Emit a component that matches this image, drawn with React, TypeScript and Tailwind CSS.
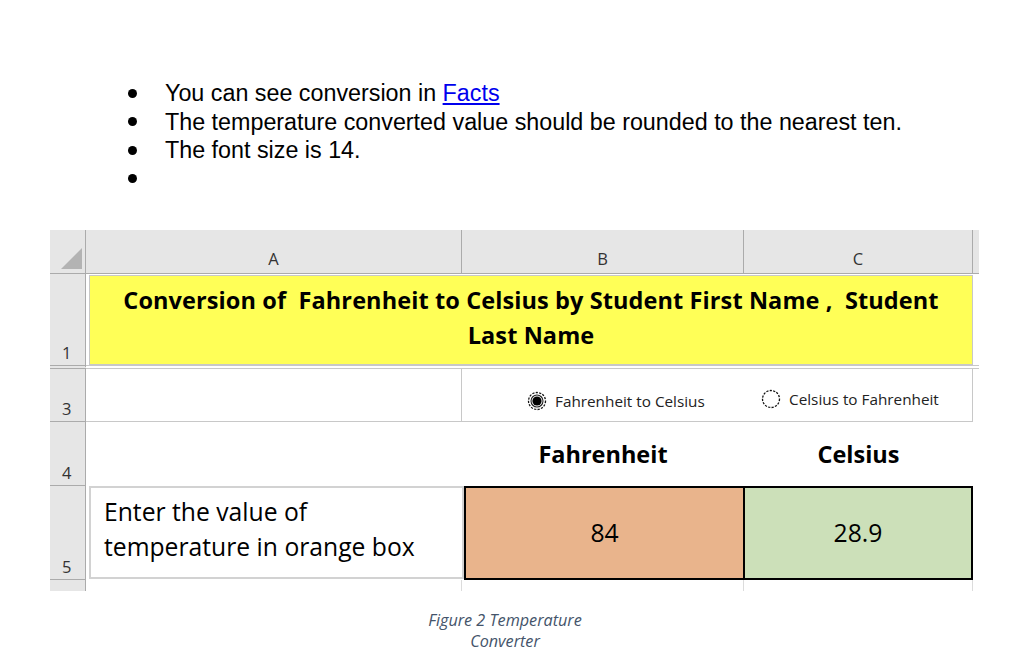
import React from "react";

const cal = { fontFamily: "'Open Sans', Lato, sans-serif" };

function Radio({ checked }: { checked: boolean }) {
  return (
    <svg width="20" height="20" viewBox="0 0 20 20" className="shrink-0">
      <circle cx="10" cy="10" r="8.5" fill="white" stroke="#111" strokeWidth="1.3" strokeDasharray="2.2 1.3" />
      {checked && <circle cx="10" cy="10" r="6" fill="none" stroke="#222" strokeWidth="1.1" />}
      {checked && <circle cx="10" cy="10" r="4.6" fill="#000" />}
    </svg>
  );
}

export default function App() {
  const hdr = "bg-[#e6e6e6] border-r border-b border-[#ababab] flex items-end justify-center pb-[1px] text-[16.5px] text-[#333]";
  const rowNum = "bg-[#e6e6e6] border-r border-b border-[#ababab] flex items-end pl-[12px] text-[16.5px] text-[#333] leading-none pb-[4px]";
  return (
    <div className="w-[1036px] h-[660px] bg-white overflow-hidden flex flex-col">
      <ul
        className="pt-[79px] pl-[128px] text-[23.3px] leading-[28.5px] text-black"
        style={{ fontFamily: "'Liberation Sans', Arial, sans-serif" }}
      >
        {[
          <>You can see conversion in <a className="text-[#0000ee] underline" href="#">Facts</a></>,
          <>The temperature converted value should be rounded to the nearest ten.</>,
          <>The font size is 14.</>,
          <>&nbsp;</>,
        ].map((c, i) => (
          <li key={i} className="flex items-center h-[28.5px]">
            <span className="w-[9px] h-[9px] rounded-full bg-black mr-[28px]" />
            <span>{c}</span>
          </li>
        ))}
      </ul>

      <div
        className="ml-[50px] mt-[37px] w-[929px] h-[361px] overflow-hidden grid grid-cols-[36px_376px_282px_229px_6px] grid-rows-[44px_95px_53px_64px_94px_30px] bg-white"
        style={cal}
      >
        {/* header row */}
        <div className="bg-[#e6e6e6] border-r border-b border-[#ababab] flex items-end justify-end pr-[2px] pb-[3px]">
          <svg width="22" height="22" viewBox="0 0 22 22">
            <polygon points="21,0 21,21 0,21" fill="#b3b3b3" />
          </svg>
        </div>
        <div className={hdr}>A</div>
        <div className={hdr}>B</div>
        <div className={hdr}>C</div>
        <div className="bg-[#e6e6e6] border-b border-[#ababab]" />

        {/* row 1 */}
        <div className={rowNum + " border-b-[4px] border-double"}>1</div>
        <div className="col-span-3 border-b-[4px] border-double border-[#c8c8c8] pl-[3px] pt-[1px] bg-white">
          <div className="h-full bg-[#ffff57] border border-[#c8c8c8] flex flex-col items-center pt-[7px] text-[23.5px] font-bold text-black leading-[35px] tracking-[0.1px]">
            <span className="whitespace-pre">Conversion of  Fahrenheit to Celsius by Student First Name ,  Student</span>
            <span>Last Name</span>
          </div>
        </div>
        <div className="border-b-[4px] border-double border-[#c8c8c8]" />

        {/* row 3 */}
        <div className={rowNum}>3</div>
        <div className="border-r border-b border-[#c8c8c8]" />
        <div className="border-b border-[#c8c8c8] flex items-end pb-[10px] pl-[65px] gap-[8px] text-[15.3px] text-[#222]">
          <Radio checked />
          <span className="leading-[20px]">Fahrenheit to Celsius</span>
        </div>
        <div className="border-b border-r border-[#c8c8c8] flex items-end pb-[12px] pl-[17px] gap-[8px] text-[15.3px] text-[#222]">
          <Radio checked={false} />
          <span className="leading-[20px]">Celsius to Fahrenheit</span>
        </div>
        <div />

        {/* row 4 */}
        <div className={rowNum}>4</div>
        <div />
        <div className="flex items-center justify-center font-bold text-[23.5px] text-black pt-[2px]">Fahrenheit</div>
        <div className="flex items-center justify-center font-bold text-[23.5px] text-black pt-[2px]">Celsius</div>
        <div />

        {/* row 5 */}
        <div className={rowNum}>5</div>
        <div className="pl-[3px] pb-[1px] -mr-[2px]">
          <div className="h-full border-2 border-[#d2d2d2] pl-[13px] pt-[6px] text-[24.7px] leading-[35px] text-black">
            <div>Enter the value of</div>
            <div>temperature in orange box</div>
          </div>
        </div>
        <div className="bg-[#e9b48c] border-2 border-r border-black ml-[2px] flex items-center justify-center text-[24.7px] text-black">84</div>
        <div className="bg-[#cce0b9] border-2 border-l border-black flex items-center justify-center text-[24.7px] text-black">28.9</div>
        <div />

        {/* row 6 */}
        <div className="bg-[#e6e6e6] border-r border-[#ababab] flex items-start pl-[12px] text-[16.5px] text-[#333] leading-none pt-[9px]">6</div>
        <div className="border-r border-[#dcdcdc]" />
        <div className="border-r border-[#dcdcdc]" />
        <div className="border-r border-[#dcdcdc]" />
        <div />
      </div>

      <div
        className="mt-[19px] w-[1010px] text-center italic text-[16.2px] leading-[21px] text-[#44546a]"
        style={cal}
      >
        <div>Figure 2 Temperature</div>
        <div>Converter</div>
      </div>
    </div>
  );
}
